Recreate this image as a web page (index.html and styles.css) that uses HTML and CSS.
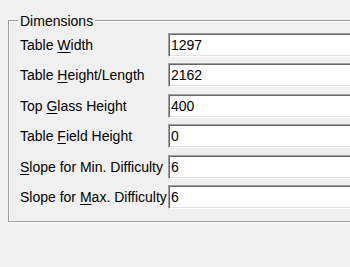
FILE: index.html
```html
<!DOCTYPE html>
<html>
<head>
<meta charset="utf-8">
<link rel="stylesheet" href="styles.css">
</head>
<body>
<fieldset class="group">
  <legend class="group-title">Dimensions</legend>
  <div class="rows">
    <label class="lbl">Table <u>W</u>idth</label>
    <input class="field" type="text" value="1297">
    <label class="lbl">Table <u>H</u>eight/Length</label>
    <input class="field" type="text" value="2162">
    <label class="lbl">Top <u>G</u>lass Height</label>
    <input class="field" type="text" value="400">
    <label class="lbl">Table <u>F</u>ield Height</label>
    <input class="field" type="text" value="0">
    <label class="lbl"><u>S</u>lope for Min. Difficulty</label>
    <input class="field" type="text" value="6">
    <label class="lbl">Slope for <u>M</u>ax. Difficulty</label>
    <input class="field" type="text" value="6">
  </div>
</fieldset>
</body>
</html>
```
FILE: styles.css
```css
html, body {
  margin: 0;
  padding: 0;
  background: #f0f0f0;
  overflow: hidden;
  width: 350px;
  height: 267px;
}
body {
  font-family: "Liberation Sans", Arial, sans-serif;
  font-size: 14px;
  color: #000;
}
.group {
  margin: 11px 0 0 8px;
  width: 342px;
  box-sizing: border-box;
  padding: 4px 0 12px 11px;
  border: 1px solid #a0a0a0;
  border-right: 0;
  box-shadow: inset 1px 1px 0 #fff, 0 1px 0 #fff;
}
.group-title {
  margin-left: -2px;
  padding: 2px 2px 0 2px;
  line-height: 16px;
  background: #f0f0f0;
}
.rows {
  display: grid;
  grid-template-columns: 148px 1fr;
  grid-auto-rows: 24px;
  row-gap: 6.4px;
  align-items: center;
}
.lbl {
  white-space: nowrap;
  line-height: 16px;
}
.lbl u {
  text-underline-offset: 2px;
}
.field {
  height: 24px;
  box-sizing: border-box;
  margin: 0;
  padding: 0 2px;
  font-family: "Liberation Sans", Arial, sans-serif;
  font-size: 14px;
  color: #000;
  background: #fff;
  border: 1px solid;
  border-color: #a0a0a0 #fff #fff #a0a0a0;
  border-right: 0;
  box-shadow: inset 1px 1px 0 #696969, inset 0 -1px 0 #e3e3e3;
  outline: none;
  width: 100%;
  min-width: 0;
}
```
